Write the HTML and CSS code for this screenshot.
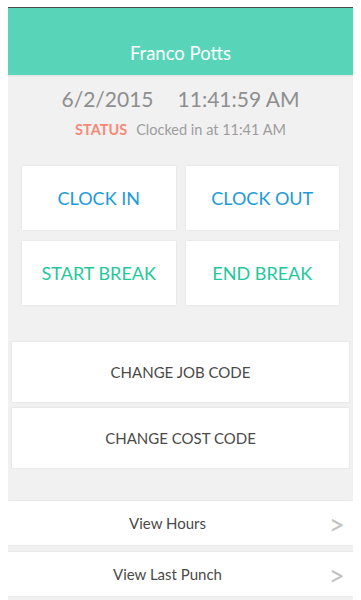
FILE: index.html
```html
<!DOCTYPE html>
<html>
<head>
<meta charset="utf-8">
<link rel="stylesheet" href="styles.css">
</head>
<body>
<div class="app">
  <header class="header"><span class="name">Franco Potts</span></header>
  <main class="main">
    <div class="datetime"><span>6/2/2015</span><span>11:41:59 AM</span></div>
    <div class="status"><span class="status-label">STATUS</span><span class="status-text">Clocked in at 11:41 AM</span></div>
    <div class="punch-grid">
      <button class="tile blue">CLOCK IN</button>
      <button class="tile blue">CLOCK OUT</button>
      <button class="tile green">START BREAK</button>
      <button class="tile green">END BREAK</button>
    </div>
    <div class="codes">
      <button class="code">CHANGE JOB CODE</button>
      <button class="code">CHANGE COST CODE</button>
    </div>
    <div class="list">
      <div class="row"><span>View Hours</span><span class="chev">&gt;</span></div>
      <div class="row"><span>View Last Punch</span><span class="chev">&gt;</span></div>
    </div>
  </main>
</div>
</body>
</html>
```
FILE: styles.css
```css
html, body {
  margin: 0;
  padding: 0;
  background: #ffffff;
  font-family: Lato, "Open Sans", "Liberation Sans", sans-serif;
}
.app {
  width: 345px;
  margin: 7px 0 0 8px;
  border-top: 1px solid #4a4a4a;
  background: #f1f1f1;
  height: 593px;
  overflow: hidden;
}
.header {
  height: 67px;
  background: #58d5b8;
  display: flex;
  align-items: flex-end;
  justify-content: center;
  box-shadow: 0 1px 2px rgba(0,0,0,0.08);
  position: relative;
}
.name {
  color: #ffffff;
  font-size: 18.5px;
  line-height: 18px;
  margin-bottom: 13px;
}
.main {
  display: flex;
  flex-direction: column;
}
.datetime {
  display: flex;
  justify-content: center;
  gap: 24px;
  color: #8e8e8e;
  font-size: 21px;
  line-height: 26px;
  margin-top: 11px;
}
.status {
  display: flex;
  justify-content: center;
  gap: 9px;
  font-size: 14.5px;
  line-height: 18px;
  margin-top: 9px;
}
.status-label {
  color: #f58a7a;
  font-weight: 700;
}
.status-text {
  color: #9d9d9d;
}
.punch-grid {
  display: grid;
  grid-template-columns: 1fr 1fr;
  column-gap: 10px;
  row-gap: 11px;
  padding: 0 14px;
  margin-top: 27px;
}
.tile, .code {
  border: none;
  background: #ffffff;
  font-family: inherit;
  box-shadow: 0 0 2px rgba(0,0,0,0.1);
  padding: 0;
}
.tile {
  height: 64px;
  font-size: 18px;
}
.blue { color: #1d9ad8; }
.green { color: #1ec89b; }
.codes {
  display: flex;
  flex-direction: column;
  gap: 6px;
  padding: 0 4px;
  margin-top: 37px;
}
.code {
  height: 60px;
  font-size: 15px;
  color: #4a4a4a;
}
.list {
  display: flex;
  flex-direction: column;
  gap: 7px;
  margin-top: 33px;
}
.row {
  height: 44px;
  background: #ffffff;
  position: relative;
  display: flex;
  align-items: center;
  justify-content: center;
  padding-right: 26px;
  font-size: 15px;
  color: #4a4a4a;
  box-shadow: 0 0 2px rgba(0,0,0,0.1);
}
.chev {
  position: absolute;
  right: 8px;
  top: 9px;
  font-size: 28px;
  line-height: 28px;
  color: #c2c2c2;
}
```
